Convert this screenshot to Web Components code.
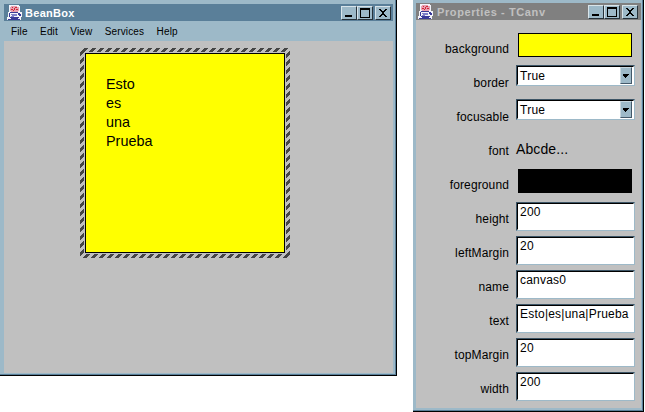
<!DOCTYPE html>
<html><head><meta charset="utf-8"><title>BeanBox</title>
<style>
html,body{margin:0;padding:0;background:#fff;width:645px;height:412px;overflow:hidden}
body{position:relative;font-family:"Liberation Sans",Arial,sans-serif;color:#000}
#bb{left:0;top:0;width:397px;height:376px;--win-pad:4px 3px 2px 4px}
#pp{left:413px;top:0;width:231px;height:412px;--win-pad:3px 2px 3px 3px;--bar-bg:#808080;--bar-fg:#c0c0c0;--bar-h:17px;--ctl-mr:3px;--icon-ml:1px;--t-ml:3px;--t-ls:.6px}
</style></head><body>
<template id="t-icon"><style>:host{display:block;width:17px;height:16px;flex:none}svg{display:block}</style>
<svg width="17" height="16" viewBox="0 0 17 16" shape-rendering="crispEdges">
<path fill="#f4f4fa" d="M3 0h10v1h1v6h2v5h-1v3H1v-3h1V7h1z"/>
<path fill="#e8a0b0" d="M5 1h6v1h2v4h-1v1H5V6H4V2h1z"/>
<path fill="#d02838" d="M6 2h1v1H6zM9 2h2v1H9zM5 4h2v1H5zM8 3h1v2H8zM10 4h2v1h-2zM7 5h1v1H7z"/>
<path fill="#3a3a98" d="M4 7h8v1H4zM3 8h1v4H3zM4 12h9v1H4zM12 8h2v1h1v2h-2v-1h-1zM5 13h7v1H5zM2 14h12v1H2z"/>
<path fill="#8080c8" d="M5 9h6v1H5zM6 10h5v1H6zM5 11h3v1H5z"/>
</svg></template>

<template id="t-ctl"><style>
:host{display:block;box-sizing:border-box;width:16px;height:14px;background:#9db9c8;border:1px solid;border-color:#d8e4ea #27323a #27323a #d8e4ea;flex:none}
svg{display:block;width:14px;height:12px}
</style><svg viewBox="0 0 14 12" shape-rendering="crispEdges"><path id="g" fill="#000"/></svg></template>

<template id="t-bar"><style>
:host{display:flex;align-items:center;height:var(--bar-h,17px);background:var(--bar-bg,#5a7f99);color:var(--bar-fg,#fff);flex:none;padding-left:var(--icon-ml,2px)}
.t{font:bold 11px "Liberation Sans",sans-serif;letter-spacing:var(--t-ls,.3px);margin-left:var(--t-ml,2px);flex:1;white-space:nowrap;overflow:hidden}
.c{display:flex;margin-right:var(--ctl-mr,2px)}
.g{width:2px}
</style><x-icon></x-icon><span class="t"><slot></slot></span>
<span class="c"><x-ctl kind="min"></x-ctl><x-ctl kind="max"></x-ctl><span class="g"></span><x-ctl kind="close"></x-ctl></span></template>

<template id="t-win"><style>
:host{position:absolute;display:flex;flex-direction:column;box-sizing:border-box;background:#9db9c8;padding:var(--win-pad,4px);border-right:1px solid #000;border-bottom:1px solid #000;box-shadow:inset -1px -1px 0 #5a7f99}
</style><slot></slot></template>

<template id="t-menu"><style>
:host{display:flex;height:20px;align-items:center;padding-left:7px;flex:none;font:10px "Liberation Sans",sans-serif;letter-spacing:.12px;color:#000}
</style><slot></slot></template>

<template id="t-mi"><style>:host{display:block;margin-right:12.5px}</style><slot></slot></template>

<template id="t-work"><style>
:host{display:block;flex:1;background:#c0c0c0;padding:7px 0 0 76px;min-height:0}
</style><slot></slot></template>

<template id="t-bean"><style>
:host{display:block;box-sizing:border-box;width:210px;height:210px;padding:5px;background:repeating-linear-gradient(135deg,#c0c0c0 0 3.1px,#454545 3.1px 5.66px)}
.c{box-sizing:border-box;height:200px;background:#ff0;border:1px solid #000;box-shadow:0 0 0 1px #c0c0c0;padding:21px 20px 20px;font:14.4px/19px "Liberation Sans",sans-serif}
</style><div class="c"><slot></slot></div></template>

<template id="t-sheet"><style>
:host{display:grid;flex:1;background:#c0c0c0;grid-template-columns:93px 1fr;grid-auto-rows:34px;padding-top:11px;align-content:start;min-height:0}
</style><slot></slot></template>

<template id="t-row"><style>
:host{display:contents}
.l{font:12px "Liberation Sans",sans-serif;letter-spacing:.12px;text-align:right;padding-top:11px;height:15px;line-height:15px;white-space:nowrap}
.v{padding-left:7px;min-width:0}
</style><div class="l"><slot name="label"></slot></div><div class="v"><slot></slot></div></template>

<template id="t-swatch"><style>
:host{display:block;box-sizing:border-box;width:114px;height:24px;margin:2px 0 0 2px;border:1px solid #000;background:var(--c,#ff0)}
</style></template>

<template id="t-choice"><style>
:host{display:flex;box-sizing:border-box;width:119px;height:21px;background:#fff;border:1px solid;border-color:#3d5566 #9db9c8 #9db9c8 #3d5566}
.i{display:flex;flex:1;border:1px solid;border-color:#000 transparent transparent #000;min-width:0}
.t{flex:1;font:12px/14px "Liberation Sans",sans-serif;letter-spacing:.25px;padding:2px 0 0 2px}
.b{box-sizing:border-box;width:12px;height:17px;margin:0 1px 0 0;background:#9db9c8;border:1px solid;border-color:#c9d8e0 #44596a #44596a #c9d8e0;display:flex;align-items:center;justify-content:center}
svg{display:block}
</style><div class="i"><span class="t"><slot></slot></span><span class="b"><svg width="6" height="4" viewBox="0 0 6 4" shape-rendering="crispEdges"><path d="M0 0h6v1H5v1H4v1H3v1H2V3H1V2H0z" fill="#000"/></svg></span></div></template>

<template id="t-field"><style>
:host{display:block;box-sizing:border-box;width:119px;height:29px;margin-top:1px;background:#fff;border:1px solid;border-color:#3d5566 #9db9c8 #9db9c8 #3d5566}
.i{box-sizing:border-box;height:100%;border:1px solid;border-color:#000 transparent transparent #000;font:12px/14px "Liberation Sans",sans-serif;letter-spacing:.22px;padding:1px 0 0 2px;white-space:nowrap;overflow:hidden}
</style><div class="i"><slot></slot></div></template>

<template id="t-font"><style>
:host{display:block;font:14px/17px "Liberation Sans",sans-serif;letter-spacing:.1px;padding-top:8px;margin-left:0}
</style><slot></slot></template>

<x-win id="bb">
  <x-bar>BeanBox</x-bar>
  <x-menu><x-mi>File</x-mi><x-mi>Edit</x-mi><x-mi>View</x-mi><x-mi>Services</x-mi><x-mi>Help</x-mi></x-menu>
  <x-work><x-bean><div>Esto</div><div>es</div><div>una</div><div>Prueba</div></x-bean></x-work>
</x-win>

<x-win id="pp">
  <x-bar>Properties - TCanv</x-bar>
  <x-sheet>
    <x-row><span slot="label">background</span><x-swatch style="--c:#ff0"></x-swatch></x-row>
    <x-row><span slot="label">border</span><x-choice>True</x-choice></x-row>
    <x-row><span slot="label">focusable</span><x-choice>True</x-choice></x-row>
    <x-row><span slot="label">font</span><x-fontv>Abcde...</x-fontv></x-row>
    <x-row><span slot="label">foreground</span><x-swatch style="--c:#000"></x-swatch></x-row>
    <x-row><span slot="label">height</span><x-field>200</x-field></x-row>
    <x-row><span slot="label">leftMargin</span><x-field>20</x-field></x-row>
    <x-row><span slot="label">name</span><x-field>canvas0</x-field></x-row>
    <x-row><span slot="label">text</span><x-field>Esto|es|una|Prueba</x-field></x-row>
    <x-row><span slot="label">topMargin</span><x-field>20</x-field></x-row>
    <x-row><span slot="label">width</span><x-field>200</x-field></x-row>
  </x-sheet>
</x-win>

<script>
function def(name,tpl,init){customElements.define(name,class extends HTMLElement{
  constructor(){super();const r=this.attachShadow({mode:'open'});r.appendChild(document.getElementById(tpl).content.cloneNode(true));}
  connectedCallback(){if(init)init(this)}
});}
const G={min:'M3 8h7v2H3z',max:'M2 1h10v10H2zM3 3v7h8V3z',close:'M3 2h2v1h1v1h2V3h1V2h2v1h-1v1H9v1H8v2h1v1h1v1h1v1H9V9H8V8H6v1H5v1H3V9h1V8h1V7h1V5H5V4H4V3H3z'};
def('x-icon','t-icon');
def('x-ctl','t-ctl',e=>{const p=e.shadowRoot.getElementById('g');p.setAttribute('d',G[e.getAttribute('kind')]);p.setAttribute('fill-rule','evenodd')});
def('x-bar','t-bar');def('x-win','t-win');def('x-menu','t-menu');def('x-mi','t-mi');
def('x-work','t-work');def('x-bean','t-bean');def('x-sheet','t-sheet');def('x-row','t-row');
def('x-swatch','t-swatch');def('x-choice','t-choice');def('x-field','t-field');def('x-fontv','t-font');
</script>
</body></html>
